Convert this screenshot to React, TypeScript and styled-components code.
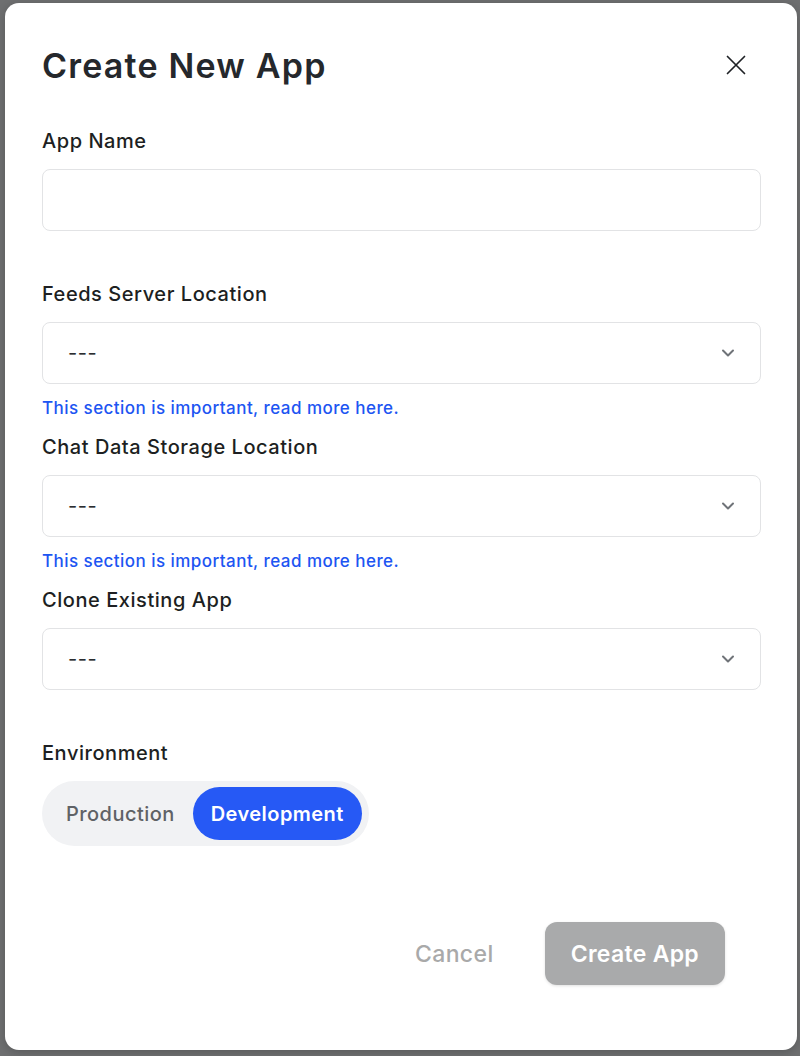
import React, { useState } from 'react';
import styled, { createGlobalStyle } from 'styled-components';
import { ChevronDown } from 'lucide-react';

const GlobalStyle = createGlobalStyle`
  html, body {
    margin: 0;
    padding: 0;
    height: 100%;
  }
  body {
    font-family: Inter, 'Noto Sans', 'Liberation Sans', sans-serif;
    -webkit-font-smoothing: antialiased;
  }
  #root {
    height: 100%;
  }
`;

const Backdrop = styled.div`
  box-sizing: border-box;
  width: 800px;
  height: 1056px;
  padding: 3px 3px 6px 5px;
  background: #6e6f70;
  overflow: hidden;
`;

const Modal = styled.div`
  box-sizing: border-box;
  height: 100%;
  background: #ffffff;
  border-radius: 14px;
  box-shadow: 0 2px 10px rgba(0, 0, 0, 0.2);
  padding: 0 36px 0 37px;
  display: flex;
  flex-direction: column;
`;

const Header = styled.div`
  display: flex;
  align-items: center;
  justify-content: space-between;
  height: 124px;
`;

const Title = styled.h1`
  margin: 0;
  font-size: 34px;
  font-weight: 600;
  color: #25282c;
  letter-spacing: 1.2px;
`;

const CloseButton = styled.button`
  border: none;
  background: transparent;
  padding: 0;
  margin-right: 10px;
  width: 30px;
  height: 30px;
  display: flex;
  align-items: center;
  justify-content: center;
  cursor: pointer;
  color: #1f2226;
`;

const Field = styled.div`
  display: flex;
  flex-direction: column;
`;

const Label = styled.label`
  font-size: 20px;
  line-height: 28px;
  font-weight: 450;
  letter-spacing: 0.55px;
  color: #1d1f22;
  margin-bottom: 14px;
`;

const Input = styled.input`
  box-sizing: border-box;
  height: 62px;
  width: 100%;
  border: 1px solid #e2e3e5;
  border-radius: 8px;
  padding: 0 25px;
  font-family: inherit;
  font-size: 20px;
  outline: none;
`;

const SelectBox = styled.div`
  box-sizing: border-box;
  height: 62px;
  width: 100%;
  border: 1px solid #e2e3e5;
  border-radius: 8px;
  padding: 0 22px 0 25px;
  display: flex;
  align-items: center;
  justify-content: space-between;
  font-size: 20px;
  letter-spacing: 0.6px;
  color: #2b2d30;
  cursor: pointer;
`;

const Chevron = styled(ChevronDown)`
  color: #6f7378;
`;

const HelperSlot = styled.div`
  box-sizing: border-box;
  height: 49px;
  padding-top: 12px;
`;

const HelperLink = styled.a`
  display: block;
  font-size: 17px;
  line-height: 24px;
  font-weight: 500;
  letter-spacing: 0.45px;
  color: #1d55f2;
  text-decoration: none;
`;

const Toggle = styled.div`
  display: inline-flex;
  align-self: flex-start;
  padding: 6px 7px 6px 6px;
  background: #f1f2f4;
  border-radius: 33px;
`;

const ToggleOption = styled.button<{ $active?: boolean }>`
  border: none;
  height: 53px;
  padding: 0 18px;
  border-radius: 27px;
  font-family: inherit;
  font-size: 20px;
  letter-spacing: 0.45px;
  font-weight: ${(p) => (p.$active ? 600 : 500)};
  background: ${(p) => (p.$active ? '#2659f5' : 'transparent')};
  color: ${(p) => (p.$active ? '#ffffff' : '#5f6266')};
  cursor: pointer;
`;

const Footer = styled.div`
  display: flex;
  justify-content: flex-end;
  align-items: center;
  gap: 25px;
  margin-top: 76px;
  padding-right: 36px;
`;

const CancelButton = styled.button`
  border: none;
  background: transparent;
  height: 63px;
  padding: 0 26px;
  font-family: inherit;
  font-size: 23px;
  font-weight: 500;
  letter-spacing: 0.4px;
  color: #a9a9a9;
  cursor: pointer;
`;

const PrimaryButton = styled.button`
  border: none;
  height: 63px;
  padding: 0 26px;
  border-radius: 12px;
  background: #a9aaab;
  box-shadow: 0 1px 3px rgba(0, 0, 0, 0.12);
  font-family: inherit;
  font-size: 23px;
  font-weight: 600;
  letter-spacing: 0.3px;
  color: #ffffff;
  cursor: not-allowed;
`;

const Select: React.FC<{ value: string }> = ({ value }) => (
  <SelectBox>
    <span>{value}</span>
    <Chevron size={20} strokeWidth={2.4} />
  </SelectBox>
);

const App: React.FC = () => {
  const [env, setEnv] = useState<'production' | 'development'>('development');
  const [name, setName] = useState('');

  return (
    <>
      <GlobalStyle />
      <Backdrop>
        <Modal>
          <Header>
            <Title>Create New App</Title>
            <CloseButton aria-label="Close">
              <svg width="20" height="20" viewBox="0 0 20 20">
                <path
                  d="M1.5 1.5 L18.5 18.5 M18.5 1.5 L1.5 18.5"
                  stroke="currentColor"
                  strokeWidth="1.7"
                  strokeLinecap="round"
                />
              </svg>
            </CloseButton>
          </Header>

          <Field>
            <Label>App Name</Label>
            <Input value={name} onChange={(e) => setName(e.target.value)} />
            <HelperSlot />
          </Field>

          <Field>
            <Label>Feeds Server Location</Label>
            <Select value="---" />
            <HelperSlot>
              <HelperLink href="#">This section is important, read more here.</HelperLink>
            </HelperSlot>
          </Field>

          <Field>
            <Label>Chat Data Storage Location</Label>
            <Select value="---" />
            <HelperSlot>
              <HelperLink href="#">This section is important, read more here.</HelperLink>
            </HelperSlot>
          </Field>

          <Field>
            <Label>Clone Existing App</Label>
            <Select value="---" />
            <HelperSlot />
          </Field>

          <Field>
            <Label>Environment</Label>
            <Toggle>
              <ToggleOption
                $active={env === 'production'}
                onClick={() => setEnv('production')}
              >
                Production
              </ToggleOption>
              <ToggleOption
                $active={env === 'development'}
                onClick={() => setEnv('development')}
              >
                Development
              </ToggleOption>
            </Toggle>
          </Field>

          <Footer>
            <CancelButton>Cancel</CancelButton>
            <PrimaryButton disabled>Create App</PrimaryButton>
          </Footer>
        </Modal>
      </Backdrop>
    </>
  );
};

export default App;
